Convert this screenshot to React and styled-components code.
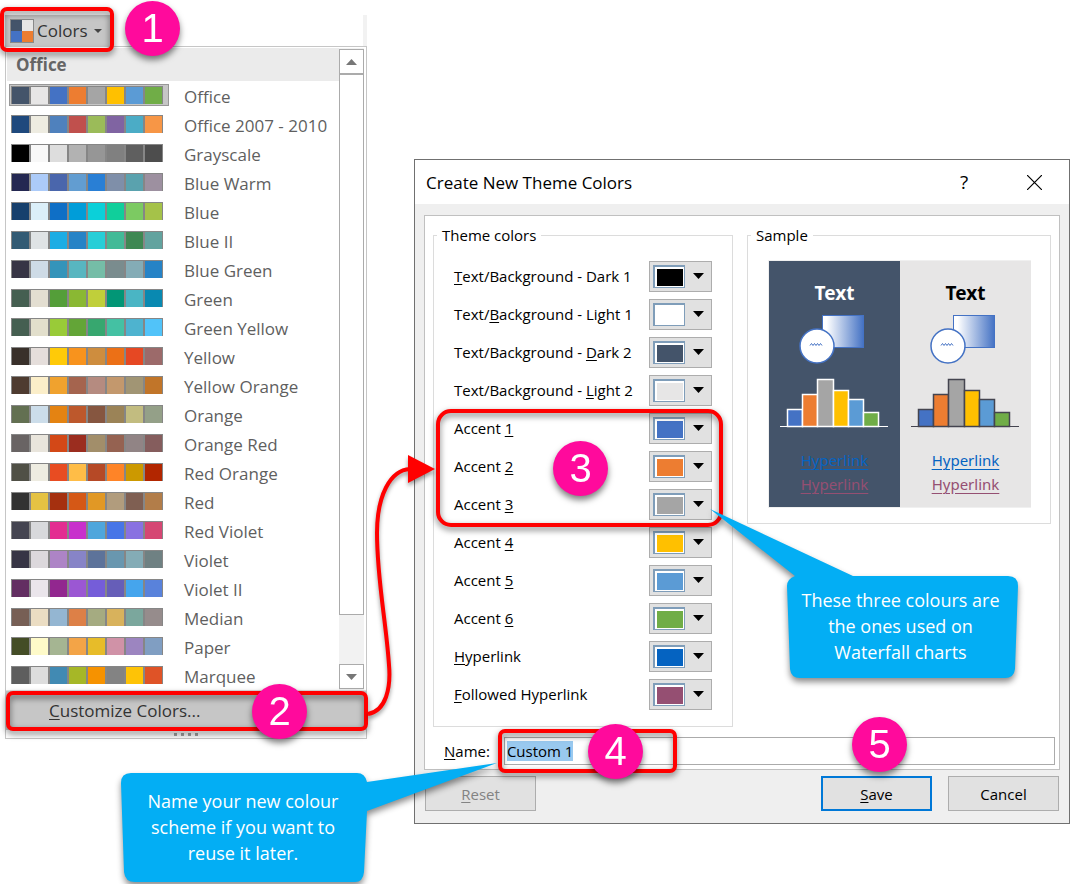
import React, { useEffect, useRef } from 'react';
import styled, { createGlobalStyle } from 'styled-components';

const schemes = [
  { name: 'Office', colors: ['#44546a', '#e7e6e6', '#4472c4', '#ed7d31', '#a5a5a5', '#ffc000', '#5b9bd5', '#70ad47'] },
  { name: 'Office 2007 - 2010', colors: ['#1f497d', '#eeece1', '#4f81bd', '#c0504d', '#9bbb59', '#8064a2', '#4bacc6', '#f79646'] },
  { name: 'Grayscale', colors: ['#000000', '#f8f8f8', '#dddddd', '#b2b2b2', '#969696', '#808080', '#5f5f5f', '#4d4d4d'] },
  { name: 'Blue Warm', colors: ['#242852', '#accbf9', '#4a66ac', '#629dd1', '#297fd5', '#7f8fa9', '#5aa2ae', '#9d90a0'] },
  { name: 'Blue', colors: ['#17406d', '#dbeff9', '#0f6fc6', '#009dd9', '#0bd0d9', '#10cf9b', '#7cca62', '#a5c249'] },
  { name: 'Blue II', colors: ['#335b74', '#dfe3e5', '#1cade4', '#2683c6', '#27ced7', '#42ba97', '#3e8853', '#62a39f'] },
  { name: 'Blue Green', colors: ['#373545', '#cedbe6', '#3494ba', '#58b6c0', '#75bda7', '#7a8c8e', '#84acb6', '#2683c6'] },
  { name: 'Green', colors: ['#455f51', '#e3ded1', '#549e39', '#8ab833', '#c0cf3a', '#029676', '#4ab5c4', '#0989b1'] },
  { name: 'Green Yellow', colors: ['#455f51', '#e2dfcc', '#99cb38', '#63a537', '#37a76f', '#44c1a3', '#4eb3cf', '#51c3f9'] },
  { name: 'Yellow', colors: ['#39302a', '#e5dedb', '#ffca08', '#f8931d', '#ce8d3e', '#ec7016', '#e64823', '#9c6a6a'] },
  { name: 'Yellow Orange', colors: ['#4e3b30', '#fbeec9', '#f0a22e', '#a5644e', '#b58b80', '#c3986d', '#a19574', '#c17529'] },
  { name: 'Orange', colors: ['#637052', '#ccddea', '#e48312', '#bd582c', '#865640', '#9b8357', '#c2bc80', '#94a088'] },
  { name: 'Orange Red', colors: ['#696464', '#e9e5dc', '#d34817', '#9b2d1f', '#a28e6a', '#956251', '#918485', '#855d5d'] },
  { name: 'Red Orange', colors: ['#505046', '#eeece1', '#e84c22', '#ffbd47', '#b64926', '#ff8427', '#cc9900', '#b22600'] },
  { name: 'Red', colors: ['#323232', '#e5c243', '#a5300f', '#d55816', '#e19825', '#b19c7d', '#7f5f52', '#b27d49'] },
  { name: 'Red Violet', colors: ['#454551', '#d8d9dc', '#e32d91', '#c830cc', '#4ea6dc', '#4775e7', '#8971e1', '#d54773'] },
  { name: 'Violet', colors: ['#373545', '#dcd8dc', '#ad84c6', '#8784c7', '#5d739a', '#6997af', '#84acb6', '#6f8183'] },
  { name: 'Violet II', colors: ['#632e62', '#eae5eb', '#92278f', '#9b57d3', '#755dd9', '#665eb8', '#45a5ed', '#5982db'] },
  { name: 'Median', colors: ['#775f55', '#ebddc3', '#94b6d2', '#dd8047', '#a5ab81', '#d8b25c', '#7ba79d', '#968c8c'] },
  { name: 'Paper', colors: ['#444d26', '#fefac9', '#a5b592', '#f3a447', '#e7bc29', '#d092a7', '#9c85c0', '#809ec2'] },
  { name: 'Marquee', colors: ['#5e5e5e', '#dddddd', '#418ab3', '#a6b727', '#f69200', '#838383', '#fec306', '#df5327'] },
];

const baseSlots = [
  { id: 'dark1', label: '_Text/Background - Dark 1', color: '#000000' },
  { id: 'light1', label: 'Text/_Background - Light 1', color: '#ffffff' },
  { id: 'dark2', label: 'Text/Background - _Dark 2', color: '#44546a' },
  { id: 'light2', label: 'Text/Background - _Light 2', color: '#e7e6e6' },
];

const waterfallSlots = [
  { id: 'accent1', label: 'Accent _1', color: '#4472c4' },
  { id: 'accent2', label: 'Accent _2', color: '#ed7d31' },
  { id: 'accent3', label: 'Accent _3', color: '#a5a5a5' },
];

const otherSlots = [
  { id: 'accent4', label: 'Accent _4', color: '#ffc000' },
  { id: 'accent5', label: 'Accent _5', color: '#5b9bd5' },
  { id: 'accent6', label: 'Accent _6', color: '#70ad47' },
  { id: 'hyperlink', label: '_Hyperlink', color: '#0563c1' },
  { id: 'followed', label: '_Followed Hyperlink', color: '#954f72' },
];

const bars = [
  { x: 18, y: 99, width: 15, color: '#4472c4' },
  { x: 33, y: 84, width: 15, color: '#ed7d31' },
  { x: 48, y: 69, width: 16, color: '#a5a5a5' },
  { x: 64, y: 80, width: 15, color: '#ffc000' },
  { x: 79, y: 89, width: 15, color: '#5b9bd5' },
  { x: 94, y: 102, width: 15, color: '#70ad47' },
];

// underlines the letter that follows the underscore
const Mnemonic = ({ text }) => {
  const at = text.indexOf('_');
  return (
    <span>
      {text.slice(0, at)}
      <Key>{text[at + 1]}</Key>
      {text.slice(at + 2)}
    </span>
  );
};

const ColorSlot = ({ slot }) => (
  <SlotRow>
    <label htmlFor={slot.id}><Mnemonic text={slot.label} /></label>
    <SlotButton id={slot.id} type="button" aria-haspopup="true">
      <SlotSwatch $color={slot.color} />
      <svg width="11" height="6" viewBox="0 0 11 6"><path d="M0 0H11L5.5 6Z" fill="#000" /></svg>
    </SlotButton>
  </SlotRow>
);

const SamplePane = ({ id, dark }) => {
  const line = dark ? '#ffffff' : '#44444f';
  return (
    <Pane $dark={dark}>
      <PaneTitle>Text</PaneTitle>
      <svg width="131" height="120" viewBox="0 0 131 120">
        <defs>
          <linearGradient id={id}>
            <stop offset="0.1" stopColor="#ffffff" />
            <stop offset="1" stopColor="#4472c4" />
          </linearGradient>
        </defs>
        <rect x="53.5" y="5.5" width="41" height="32" fill={`url(#${id})`} stroke="#4472c4" />
        <circle cx="48" cy="36" r="17" fill="#fff" stroke="#4472c4" strokeWidth="1.5" />
        <path d="M41 35.5l1.500-2 1.500 2 1.500-2 1.500 2 1.500-2 1.500 2 1.500-2 1.500 2" fill="none" stroke="#4472c4" />
        {bars.map(bar => (
          <rect
            key={bar.x}
            x={bar.x + 0.5}
            y={bar.y + 0.5}
            width={bar.width}
            height={116 - bar.y}
            fill={bar.color}
            stroke={line}
            strokeWidth="1.5"
          />
        ))}
        <path d="M11 116.500H119" stroke={line} />
      </svg>
      <SampleLink href="#link" $color="#0563c1">Hyperlink</SampleLink>
      <SampleLink href="#followed" $color="#954f72">Hyperlink</SampleLink>
    </Pane>
  );
};

const ColorsMenu = () => (
  <MenuColumn>
    <Ribbon>
      <ColorsButton type="button" aria-haspopup="menu">
        <svg width="24" height="24" viewBox="0 0 24 24">
          <rect width="24" height="24" fill="#8a8a8a" />
          <path d="M1 1h11v11H1z" fill="#44546a" />
          <path d="M12 1h11v11H12z" fill="#e7e6e6" />
          <path d="M1 12h11v11H1z" fill="#4472c4" />
          <path d="M12 12h11v11H12z" fill="#ed7d31" />
        </svg>
        Colors
        <svg width="8" height="4" viewBox="0 0 8 4"><path d="M0 0H8L4 4Z" fill="#444" /></svg>
      </ColorsButton>
      <RibbonEdge />
      <ButtonHighlight />
      <ButtonBadge>1</ButtonBadge>
    </Ribbon>
    <Menu>
      <MenuBody>
        <SchemeList>
          <MenuHeading>Office</MenuHeading>
          {schemes.map((scheme, i) => (
            <SchemeButton key={scheme.name} type="button">
              <Swatches $selected={i === 0}>
                {scheme.colors.map((color, n) => <Swatch key={n} $color={color} />)}
              </Swatches>
              <SchemeName>{scheme.name}</SchemeName>
            </SchemeButton>
          ))}
        </SchemeList>
        <ScrollBar>
          <ScrollButton type="button" aria-label="Scroll up">
            <svg width="11" height="6" viewBox="0 0 11 6"><path d="M0 6H11L5.500 0Z" fill="#777" /></svg>
          </ScrollButton>
          <ScrollThumb />
          <ScrollButton type="button" aria-label="Scroll down">
            <svg width="11" height="6" viewBox="0 0 11 6"><path d="M0 0H11L5.500 6Z" fill="#777" /></svg>
          </ScrollButton>
        </ScrollBar>
      </MenuBody>
      <CustomizeRow>
        <CustomizeButton type="button"><Mnemonic text="_Customize Colors..." /></CustomizeButton>
        <CustomizeHighlight />
        <CustomizeBadge>2</CustomizeBadge>
      </CustomizeRow>
      <Grip><i /><i /><i /><i /></Grip>
    </Menu>
  </MenuColumn>
);

const ThemeDialog = () => {
  const nameInput = useRef(null);

  useEffect(() => {
    nameInput.current.focus();
    nameInput.current.select();
  }, []);

  return (
    <Dialog role="dialog" aria-labelledby="dialog-title">
      <TitleBar>
        <DialogTitle id="dialog-title">Create New Theme Colors</DialogTitle>
        <TitleButton type="button">?</TitleButton>
        <TitleButton type="button" aria-label="Close">
          <svg width="15" height="15" viewBox="0 0 15 15"><path d="M0 0L15 15M15 0L0 15" stroke="#000" strokeWidth="1.200" /></svg>
        </TitleButton>
      </TitleBar>
      <DialogBody>
        <Panel>
          <Groups>
            <ThemeGroup>
              <Legend>Theme colors</Legend>
              {baseSlots.map(slot => <ColorSlot key={slot.id} slot={slot} />)}
              <WaterfallGroup>
                {waterfallSlots.map(slot => <ColorSlot key={slot.id} slot={slot} />)}
                <AccentHighlight />
                <AccentBadge>3</AccentBadge>
              </WaterfallGroup>
              {otherSlots.map(slot => <ColorSlot key={slot.id} slot={slot} />)}
            </ThemeGroup>
            <SampleGroup>
              <Legend>Sample</Legend>
              <Sample>
                <SamplePane id="fade-dark" dark />
                <SamplePane id="fade-light" />
              </Sample>
            </SampleGroup>
          </Groups>
          <NameRow>
            <label htmlFor="scheme-name"><Mnemonic text="_Name:" /></label>
            <NameInput id="scheme-name" ref={nameInput} defaultValue="Custom 1" />
            <NameHighlight />
            <NameBadge>4</NameBadge>
          </NameRow>
        </Panel>
        <Footer>
          <PushButton type="button" disabled><Mnemonic text="_Reset" /></PushButton>
          <SaveSlot>
            <PushButton type="button" $primary><Mnemonic text="_Save" /></PushButton>
            <SaveBadge>5</SaveBadge>
          </SaveSlot>
          <PushButton type="button">Cancel</PushButton>
        </Footer>
      </DialogBody>

      <Arrow width="80" height="280" viewBox="0 0 80 280">
        <path d="M8 264C26 261 31 238 29 215C26 170 17 130 17 83C17 46 30 20 50 19" fill="none" stroke="#ff0000" strokeWidth="4" />
        <path d="M48 5L75 19L48 33Z" fill="#ff0000" />
      </Arrow>
      <WaterfallCallout>
        <CalloutShape width="308" height="170" viewBox="0 0 308 170">
          <path d="M0 0L143 67H298Q308 67 308 77L305 160Q304 169 295 169H90Q81 169 80 160L77 77Q77 70 85 67Z" fill="#03aef4" />
        </CalloutShape>
        <CalloutText>These three colours are the ones used on Waterfall charts</CalloutText>
      </WaterfallCallout>
      <NameCallout>
        <CalloutShape width="376" height="120" viewBox="0 0 376 120">
          <path d="M376 0L246 19Q244 10 236 10H10Q0 10 0 20L3 109Q4 119 14 119H234Q242 119 243 109L246 48Z" fill="#03aef4" />
        </CalloutShape>
        <CalloutText>Name your new colour scheme if you want to reuse it later.</CalloutText>
      </NameCallout>
    </Dialog>
  );
};

const App = () => (
  <Page>
    <GlobalStyle />
    <ColorsMenu />
    <ThemeDialog />
  </Page>
);

const GlobalStyle = createGlobalStyle`
  * {
    box-sizing: border-box;
  }

  body {
    margin: 0;
    background: #ffffff;
    font-family: "Open Sans", "Noto Sans", sans-serif;
    font-size: 15px;
    color: #000000;
  }

  button, input {
    font: inherit;
    color: inherit;
    margin: 0;
    padding: 0;
  }

  svg {
    display: block;
    flex: none;
  }
`;

const Page = styled.main`
  display: flex;
  align-items: flex-start;
  gap: 47px;
  padding: 0 0 60px 5px;
`;

const Key = styled.span`
  text-decoration: underline;
  text-underline-offset: 2px;
`;

const Badge = styled.div`
  position: absolute;
  z-index: 3;
  display: flex;
  align-items: center;
  justify-content: center;
  width: 55px;
  height: 55px;
  border-radius: 50%;
  background: #ff0a9c;
  color: #ffffff;
  font-family: "Liberation Sans", Arial, sans-serif;
  font-size: 40px;
  line-height: 55px;
  filter: drop-shadow(0 4px 3px rgba(0, 0, 0, 0.5));
`;

const Highlight = styled.div`
  position: absolute;
  z-index: 2;
  border: 4px solid #ff0000;
  border-radius: 7px;
  filter: drop-shadow(0 3px 3px rgba(0, 0, 0, 0.55));
  pointer-events: none;
`;

const MenuColumn = styled.nav`
  flex: 0 0 362px;
  padding-top: 15px;
  font-size: 17px;
`;

const Ribbon = styled.div`
  position: relative;
  display: flex;
  justify-content: space-between;
  height: 31px;
`;

const ColorsButton = styled.button`
  display: flex;
  align-items: center;
  gap: 3px;
  padding: 0 8px 0 5px;
  border: none;
  background: #c6c6c6;
  color: #333333;

  svg:last-child {
    margin-left: 3px;
  }
`;

const RibbonEdge = styled.div`
  width: 4px;
  background: #f2f2f2;
`;

const ButtonHighlight = styled(Highlight)`
  top: -8px;
  left: -5px;
  width: 114px;
  height: 45px;
`;

const ButtonBadge = styled(Badge)`
  top: -14px;
  left: 120px;
`;

const Menu = styled.div`
  border: 1px solid #c6c6c6;
  background: #ffffff;
`;

const MenuBody = styled.div`
  display: flex;
  padding: 1px 2px 0 1px;
`;

const SchemeList = styled.div`
  flex: 1;
`;

const MenuHeading = styled.div`
  height: 33px;
  padding-left: 9px;
  background: #ebebeb;
  color: #666666;
  font-weight: bold;
  line-height: 34px;
`;

const SchemeButton = styled.button`
  display: flex;
  align-items: flex-start;
  gap: 15px;
  width: 100%;
  height: 29px;
  padding: 3px 0 0 2px;
  border: none;
  background: none;
  color: #5f5f5f;
  text-align: left;
`;

const SchemeName = styled.span`
  line-height: 26px;
`;

const Swatches = styled.span`
  display: flex;
  width: 160px;
  padding: 1px;
  border: 1px solid ${({ $selected }) => ($selected ? '#979797' : 'transparent')};
  background: ${({ $selected }) => ($selected ? '#c6c6c6' : 'none')};
`;

const Swatch = styled.span`
  width: 19px;
  height: 18px;
  border: 1px solid #868686;
  border-bottom: none;
  background: ${({ $color }) => $color};
`;

const ScrollBar = styled.div`
  display: flex;
  flex-direction: column;
  width: 25px;
  padding: 1px 0;
  background: #f2f2f2;
`;

const ScrollButton = styled.button`
  display: flex;
  align-items: center;
  justify-content: center;
  height: 25px;
  border: 1px solid #ababab;
  background: #ffffff;

  &:last-child {
    margin-top: auto;
  }
`;

const ScrollThumb = styled.div`
  height: 541px;
  border: 1px solid #ababab;
  background: #ffffff;
`;

const CustomizeRow = styled.div`
  position: relative;
  border-top: 1px solid #e1e1e1;
`;

const CustomizeButton = styled.button`
  width: 100%;
  height: 39px;
  padding-left: 43px;
  border: none;
  background: #c6c6c6;
  color: #333333;
  text-align: left;
`;

const CustomizeHighlight = styled(Highlight)`
  inset: 0 -2px -1px 0;
`;

const CustomizeBadge = styled(Badge)`
  top: -7px;
  right: 59px;
`;

const Grip = styled.div`
  display: flex;
  align-items: center;
  justify-content: center;
  gap: 4px;
  height: 8px;

  i {
    width: 3px;
    height: 3px;
    background: #a0a0a0;
  }
`;

const Dialog = styled.section`
  position: relative;
  flex: 1;
  min-width: 656px;
  margin-top: 159px;
  border: 1px solid #707070;
  background: #efefef;
`;

const TitleBar = styled.header`
  display: flex;
  align-items: center;
  height: 44px;
  padding: 0 13px 0 11px;
  background: #ffffff;
`;

const DialogTitle = styled.h1`
  flex: 1;
  margin: 0;
  font-size: 17px;
  font-weight: normal;
`;

const TitleButton = styled.button`
  display: flex;
  align-items: center;
  justify-content: center;
  width: 44px;
  height: 44px;
  margin-left: 26px;
  border: none;
  background: none;
  font-size: 19px;
`;

const DialogBody = styled.div`
  padding: 11px 9px 12px;
`;

const Panel = styled.div`
  padding: 9px 4px 4px 8px;
  border: 1px solid #c0c0c0;
  background: #ffffff;
`;

const Groups = styled.div`
  display: flex;
  align-items: flex-start;
  gap: 14px;
  padding-right: 4px;
`;

const Group = styled.fieldset`
  min-width: 0;
  margin: 0;
  border: 1px solid #dcdcdc;
`;

const ThemeGroup = styled(Group)`
  flex: 0 0 300px;
  padding: 12px 20px 13px 20px;
`;

const SampleGroup = styled(Group)`
  flex: 1;
  padding: 15px 19px 15px 20px;
`;

const Legend = styled.legend`
  margin-left: -17px;
  padding: 0 5px;
  line-height: 20px;
`;

const SlotRow = styled.div`
  display: flex;
  align-items: center;
  justify-content: space-between;
  height: 38px;
`;

const SlotButton = styled.button`
  display: flex;
  align-items: center;
  justify-content: space-between;
  width: 63px;
  height: 31px;
  padding: 0 7px 0 3px;
  border: 1px solid #adadad;
  background: #e1e1e1;
`;

const SlotSwatch = styled.span`
  width: 32px;
  height: 23px;
  padding: 2px 1px 1px 2px;
  border: solid #7f9db9;
  border-width: 2px 1px 1px 2px;
  background: ${({ $color }) => $color} content-box;
  box-shadow: inset 1px 1px 0 1px #ffffff, inset -1px -1px 0 0 #ffffff;
`;

const WaterfallGroup = styled.div`
  position: relative;
`;

const AccentHighlight = styled(Highlight)`
  inset: 0 -11px -4px -18px;
  border-radius: 15px;
`;

const AccentBadge = styled(Badge)`
  top: 32px;
  left: 99px;
`;

const Sample = styled.div`
  display: flex;
  border: 1px solid #f0f0f0;
`;

const Pane = styled.div`
  display: flex;
  flex: 1;
  flex-direction: column;
  align-items: center;
  padding: 19px 0 11px;
  background: ${({ $dark }) => ($dark ? '#44546a' : '#e7e6e6')};
  color: ${({ $dark }) => ($dark ? '#ffffff' : '#000000')};
`;

const PaneTitle = styled.strong`
  height: 30px;
  font-family: "Noto Sans", sans-serif;
  font-size: 19px;
  line-height: 26px;
`;

const SampleLink = styled.a`
  color: ${({ $color }) => $color};
  font-family: "Noto Sans", sans-serif;
  line-height: 24px;
  text-underline-offset: 3px;

  svg + & {
    margin-top: 18px;
  }
`;

const NameRow = styled.div`
  position: relative;
  display: flex;
  align-items: center;
  gap: 14px;
  margin-top: 10px;
  padding-left: 11px;
`;

const NameInput = styled.input`
  flex: 1;
  min-width: 0;
  height: 28px;
  padding: 0 2px;
  border: 1px solid #ababab;
  background: #ffffff;
  outline: none;

  &::selection {
    background: #99c9ef;
    color: #000000;
  }
`;

const NameHighlight = styled(Highlight)`
  top: -8px;
  left: 65px;
  width: 179px;
  height: 44px;
`;

const NameBadge = styled(Badge)`
  top: -13px;
  left: 155px;
`;

const Footer = styled.footer`
  display: flex;
  gap: 16px;
  padding: 6px 1px 0;
`;

const SaveSlot = styled.div`
  position: relative;
  margin-left: auto;
`;

const SaveBadge = styled(Badge)`
  top: -59px;
  left: 31px;
`;

const PushButton = styled.button`
  width: 111px;
  height: 35px;
  border: ${({ $primary }) => ($primary ? '2px solid #0078d7' : '1px solid #adadad')};
  background: #e1e1e1;

  &:disabled {
    color: #838383;
  }
`;

const Arrow = styled.svg`
  position: absolute;
  z-index: 2;
  top: 290px;
  left: -55px;
  filter: drop-shadow(0 3px 2px rgba(0, 0, 0, 0.4));
`;

const Callout = styled.aside`
  position: absolute;
  z-index: 2;
  color: #ffffff;
  font-size: 18px;
  line-height: 26px;
  text-align: center;
`;

const CalloutShape = styled.svg`
  position: absolute;
  top: 0;
  left: 0;
  filter: drop-shadow(0 4px 3px rgba(0, 0, 0, 0.45));
`;

const CalloutText = styled.p`
  position: relative;
  margin: 0;
`;

const WaterfallCallout = styled(Callout)`
  top: 349px;
  left: 295px;
  width: 308px;
  padding: 78px 12px 0 85px;
`;

const NameCallout = styled(Callout)`
  top: 603px;
  left: -294px;
  width: 376px;
  padding: 25px 152px 0 20px;
`;

export default App;
